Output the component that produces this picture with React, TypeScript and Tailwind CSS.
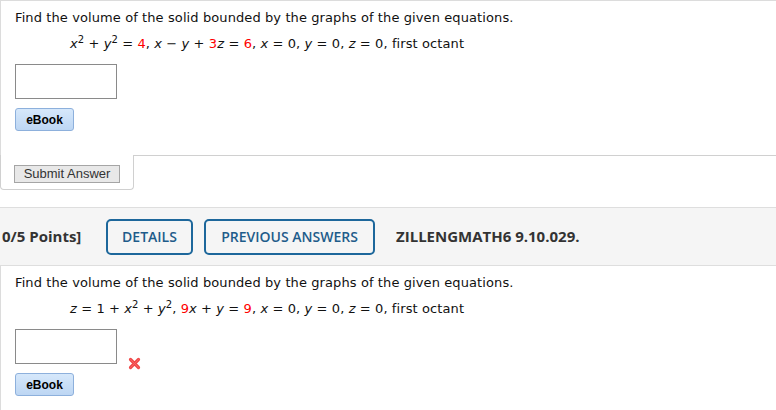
import React from "react";

const V = "italic";

function Sup({ children }: { children: React.ReactNode }) {
  return <sup className="text-[10px] relative top-[-1px] align-[4px] leading-none">{children}</sup>;
}

function R({ children }: { children: React.ReactNode }) {
  return <span className="text-[#ff0000]">{children}</span>;
}

function I({ children }: { children: React.ReactNode }) {
  return <span className={V}>{children}</span>;
}

function EBook() {
  return (
    <button className="w-[59px] h-[23px] rounded-[3px] border border-[#8db0dc] bg-gradient-to-b from-[#d6e8fb] to-[#bdd6f3] text-[12px] font-bold text-black font-['Liberation_Sans',Arial,sans-serif] leading-none">
      eBook
    </button>
  );
}

function RedX() {
  return (
    <svg width="13" height="13" viewBox="0 0 13 13" className="mb-[-6px]">
      <path d="M2.5 2.5 L10.5 10.5 M10.5 2.5 L2.5 10.5" stroke="#f04848" strokeWidth="3.2" strokeLinecap="round" />
      <path d="M2.5 2.5 L10.5 10.5 M10.5 2.5 L2.5 10.5" stroke="#ff8080" strokeWidth="1" strokeLinecap="round" opacity="0.5" />
    </svg>
  );
}

export default function App() {
  return (
    <div className="w-[776px] h-[410px] overflow-hidden bg-white font-['DejaVu_Sans',Verdana,sans-serif] text-[13px] text-[#111]">
      {/* Question 1 */}
      <div className="border-l border-t border-[#dcdcdc] h-[155px] pl-[14px] pt-[8px]">
        <div className="leading-[18px] tracking-[0.1px]">Find the volume of the solid bounded by the graphs of the given equations.</div>
        <div className="leading-[18px] mt-[8px] pl-[55px] tracking-[0.1px]">
          <I>x</I><Sup>2</Sup> + <I>y</I><Sup>2</Sup> = <R>4</R>, <I>x</I> − <I>y</I> + <R>3</R><I>z</I> = <R>6</R>, <I>x</I> = 0, <I>y</I> = 0, <I>z</I> = 0, first octant
        </div>
        <div className="mt-[11px] w-[102px] h-[35px] border border-[#8a8a8a] bg-white" />
        <div className="mt-[9px]"><EBook /></div>
      </div>
      <div className="flex h-[35px]">
        <div className="w-[134px] border-l border-r border-b border-[#d0d0d0] rounded-b-[4px] pl-[13px] pt-[9px]">
          <button className="w-[106px] h-[18px] border border-[#a5a5a5] bg-[#e8e8e8] text-[13px] text-[#333] font-['Liberation_Sans',Arial,sans-serif] leading-none">
            Submit Answer
          </button>
        </div>
        <div className="flex-1 border-t border-[#d0d0d0]" />
      </div>

      {/* Header */}
      <div className="mt-[17px] h-[59px] border-t border-b border-[#dedede] bg-[#f5f5f5] flex items-center font-['Open_Sans',sans-serif]">
        <div className="text-[15px] font-bold text-[#333] pl-[2px] w-[106px]">0/5 Points]</div>
        <div className="w-[87px] h-[36px] border-2 border-[#1d679b] rounded-[5px] flex items-center justify-center text-[14px] font-semibold text-[#1e5c8a]">DETAILS</div>
        <div className="ml-[11px] w-[171px] h-[36px] border-2 border-[#1d679b] rounded-[5px] flex items-center justify-center text-[14px] font-semibold text-[#1e5c8a]">PREVIOUS ANSWERS</div>
        <div className="ml-[21px] text-[15px] font-bold text-[#333]">ZILLENGMATH6 9.10.029.</div>
      </div>

      {/* Question 2 */}
      <div className="border-l border-[#dcdcdc] h-[200px] pl-[14px] pt-[8px]">
        <div className="leading-[18px] tracking-[0.1px]">Find the volume of the solid bounded by the graphs of the given equations.</div>
        <div className="leading-[18px] mt-[8px] pl-[55px] tracking-[0.1px]">
          <I>z</I> = 1 + <I>x</I><Sup>2</Sup> + <I>y</I><Sup>2</Sup>, <R>9</R><I>x</I> + <I>y</I> = <R>9</R>, <I>x</I> = 0, <I>y</I> = 0, <I>z</I> = 0, first octant
        </div>
        <div className="mt-[11px] flex items-end gap-[11px]">
          <div className="w-[102px] h-[35px] border border-[#8a8a8a] bg-white" />
          <RedX />
        </div>
        <div className="mt-[9px]"><EBook /></div>
      </div>
    </div>
  );
}
